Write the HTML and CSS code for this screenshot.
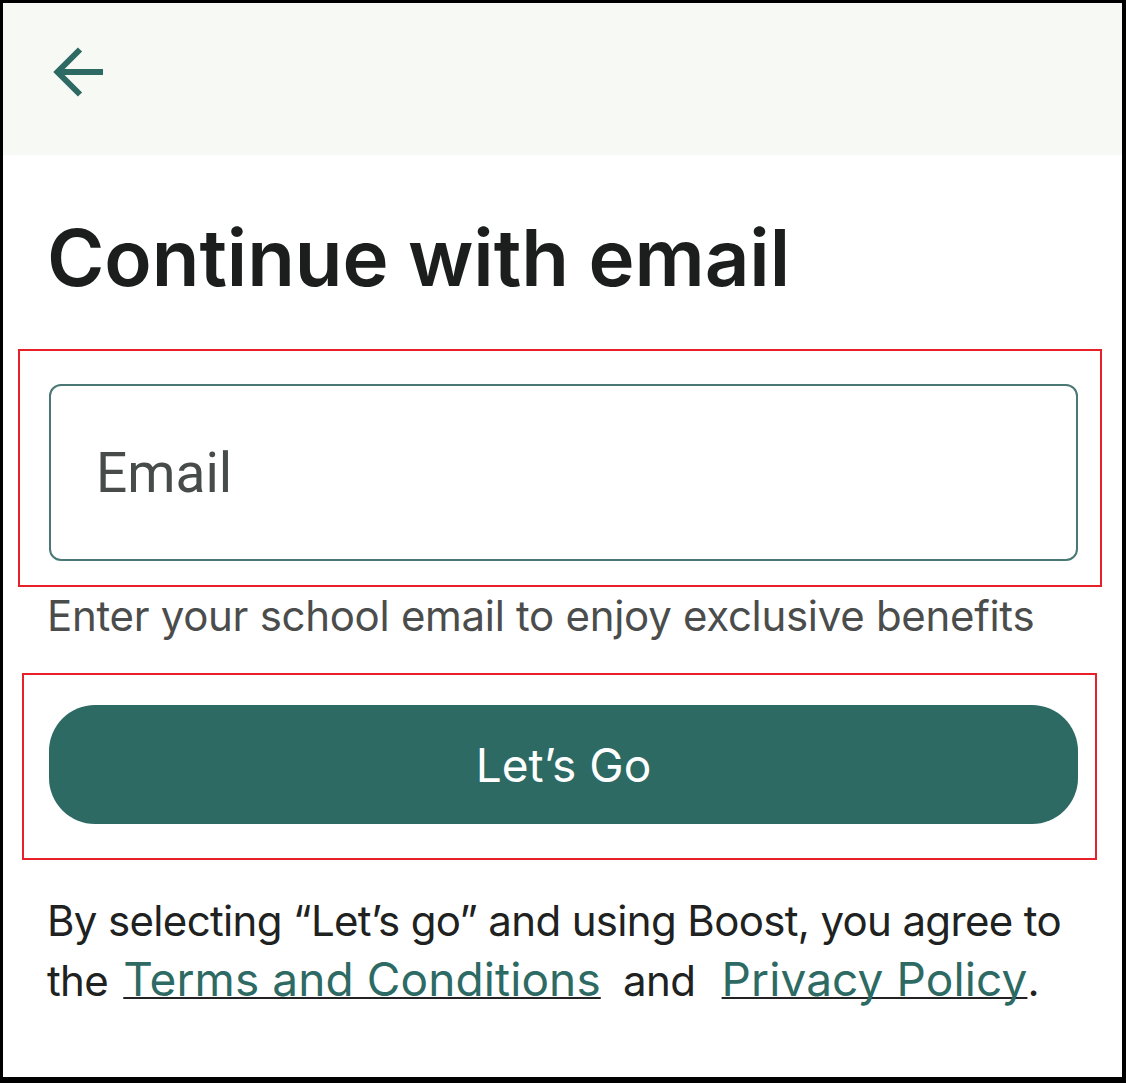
FILE: index.html
```html
<!DOCTYPE html>
<html lang="en">
<head>
<meta charset="utf-8">
<title>Continue with email</title>
<link rel="stylesheet" href="styles.css">
</head>
<body>
<div class="screen">
  <header class="topbar">
    <button class="back" aria-label="Back">
      <svg width="52" height="52" viewBox="0 0 52 52" fill="none" stroke="#2d6a64" stroke-width="6" stroke-linejoin="miter" stroke-linecap="butt">
        <path d="M50 26H6"/>
        <path d="M27 3.5L4.5 26L27 48.5"/>
      </svg>
    </button>
  </header>
  <main class="content">
    <h1 class="title">Continue with email</h1>
    <div class="field annotated annotated--field">
      <input class="email" type="email" placeholder="Email">
    </div>
    <p class="hint">Enter your school email to enjoy exclusive benefits</p>
    <div class="action annotated annotated--action">
      <button class="go">Let’s Go</button>
    </div>
    <p class="legal">By selecting “Let’s go” and using Boost, you agree to the <a class="link" href="#">Terms and Conditions</a>&nbsp; and &nbsp;<a class="link" href="#">Privacy Policy</a>.</p>
  </main>
</div>
</body>
</html>
```
FILE: styles.css
```css
html, body {
  margin: 0;
  padding: 0;
  background: #fff;
}

.screen {
  width: 1126px;
  height: 1083px;
  box-sizing: border-box;
  border-style: solid;
  border-color: #000;
  border-width: 3px 4px 6px 3px;
  background: #fff;
  overflow: hidden;
  font-family: Inter, "Noto Sans", sans-serif;
}

.topbar {
  height: 152px;
  box-sizing: border-box;
  background: #f7f9f5;
  padding: 43px 0 0 50px;
}

.back {
  display: block;
  width: 52px;
  height: 52px;
  padding: 0;
  border: 0;
  background: transparent;
}

.back svg {
  display: block;
}

.content {
  padding: 0 42px 0 44px;
}

.title {
  margin: 56px 0 0;
  font-weight: 600;
  font-size: 78px;
  line-height: 94px;
  color: #1c1e1d;
  letter-spacing: -0.1px;
}

.annotated {
  position: relative;
}

.annotated::after {
  content: "";
  position: absolute;
  border: 2px solid #e8202a;
  pointer-events: none;
}

.annotated--field::after {
  top: -35px;
  left: -31px;
  right: -24px;
  bottom: -26px;
}

.annotated--action::after {
  top: -32px;
  left: -27px;
  right: -19px;
  bottom: -36px;
}

.field {
  margin: 79px 2px 0;
}

.email {
  display: block;
  width: 100%;
  height: 177px;
  box-sizing: border-box;
  border: 2px solid #4a7874;
  border-radius: 12px;
  padding: 0 0 0 45px;
  margin: 0;
  background: #fff;
  font-family: Roboto, sans-serif;
  font-size: 55px;
  color: #474b4a;
  outline: none;
}

.email::placeholder {
  color: #474b4a;
  opacity: 1;
}

.hint {
  margin: 29px 0 0;
  font-size: 42px;
  line-height: 51px;
  letter-spacing: -0.3px;
  color: #4b4d4c;
}

.action {
  margin: 64px 2px 0;
}

.go {
  display: flex;
  align-items: center;
  justify-content: center;
  width: 100%;
  height: 119px;
  border: 0;
  border-radius: 46px;
  background: #2d6a64;
  color: #fff;
  font-family: Inter, sans-serif;
  font-size: 46px;
  font-weight: 400;
  padding: 0;
}

.legal {
  margin: 67px 0 0;
  font-size: 42px;
  line-height: 60px;
  letter-spacing: -0.65px;
  color: #202221;
}

.link {
  display: inline-block;
  margin-left: 4px;
  font-size: 46px;
  line-height: 50px;
  letter-spacing: 0.1px;
  color: #2d6a64;
  text-decoration: underline;
  text-decoration-color: #222;
  text-decoration-thickness: 2px;
  text-underline-offset: 1px;
  text-decoration-skip-ink: none;
}
```
